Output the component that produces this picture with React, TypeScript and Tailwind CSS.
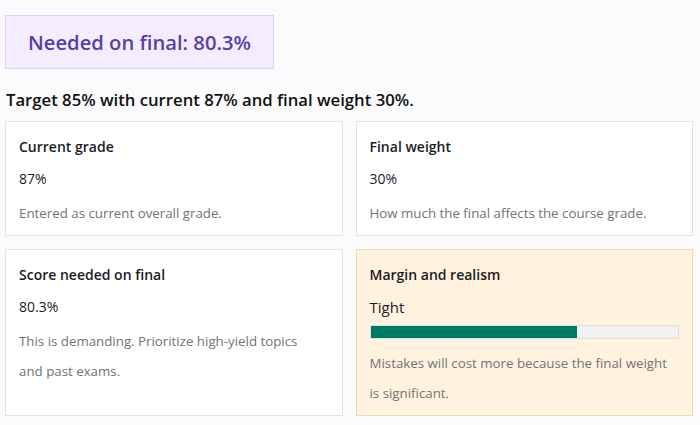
import React from "react";

const font = { fontFamily: '"Open Sans", "Noto Sans", sans-serif' };

function Card({
  title,
  value,
  desc,
  warm,
  bar,
}: {
  title: string;
  value: string;
  desc: string;
  warm?: boolean;
  bar?: number;
}) {
  return (
    <div
      className={
        "border pl-[13px] pr-[20px] pt-[15px] pb-[7px] " +
        (warm ? "bg-[#fff3e0] border-[#f6d7a7]" : "bg-white border-[#e3e1e8]")
      }
    >
      <div className="text-[14px] font-semibold leading-[20px] text-[#1b1b1f]">{title}</div>
      <div className={(bar !== undefined ? "text-[15px]" : "text-[14px]") + " mt-[11px] leading-[22px] text-[#1b1b1f]"}>
        {value}
      </div>
      {bar !== undefined && (
        <div className="mt-[7px] mr-[-7px] h-[14px] border border-[#dedede] bg-[#f2f2f2]">
          <div className="h-full bg-[#007a66]" style={{ width: `${bar}%` }} />
        </div>
      )}
      <div className={"text-[13.3px] leading-[30px] text-[#737373] " + (bar !== undefined ? "mt-[9px]" : "mt-[8px]")}>
        {desc}
      </div>
    </div>
  );
}

export default function App() {
  return (
    <div className="min-h-[425px] w-[700px] bg-[#fbfbfd] pl-[5px] pr-[7px] pt-[15px]" style={font}>
      <div className="inline-flex h-[54px] items-center border border-[#dccffa] bg-[#f3edff] px-[22px]">
        <span className="text-[20.2px] font-semibold leading-[28px] text-[#5a3ea6]">Needed on final: 80.3%</span>
      </div>
      <div className="mt-[19px] text-[16.7px] font-semibold leading-[24px] text-[#111] pl-px">
        Target 85% with current 87% and final weight 30%.
      </div>
      <div className="mt-[9px] grid grid-cols-2 gap-x-[13px] gap-y-[13px]">
        <Card title="Current grade" value="87%" desc="Entered as current overall grade." />
        <Card title="Final weight" value="30%" desc="How much the final affects the course grade." />
        <Card
          title="Score needed on final"
          value="80.3%"
          desc="This is demanding. Prioritize high-yield topics and past exams."
        />
        <Card
          title="Margin and realism"
          value="Tight"
          warm
          bar={67}
          desc="Mistakes will cost more because the final weight is significant."
        />
      </div>
    </div>
  );
}
